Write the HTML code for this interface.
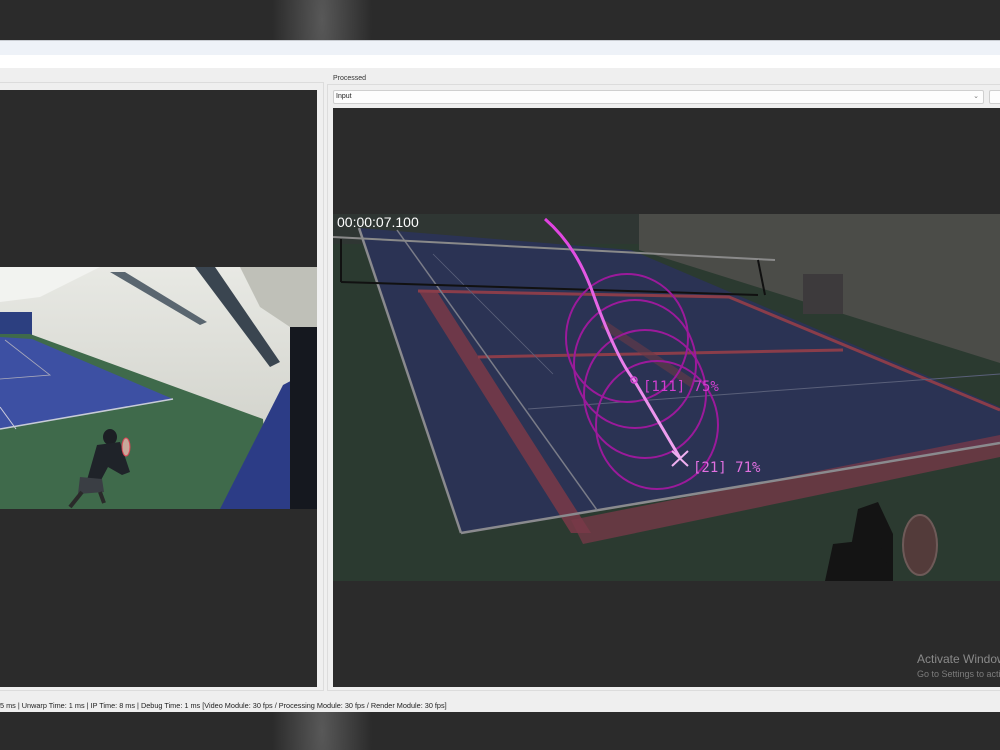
<!DOCTYPE html>
<html><head><meta charset="utf-8"><style>
*{margin:0;padding:0;box-sizing:border-box}
body{width:1000px;height:750px;overflow:hidden;background:#f0f0f0;font-family:"Liberation Sans",sans-serif;position:relative}
.abs{position:absolute}
.band{background:#2b2b2b;background-image:radial-gradient(ellipse 50px 200px at 322px 50%,#585858,rgba(43,43,43,0) 100%)}
</style></head><body>
<div class="abs band" style="left:0;top:0;width:1000px;height:40px"></div>
<div class="abs" style="left:0;top:40px;width:1000px;height:15px;background:#eef2f8;border-top:1px solid #c8ccd2"></div>
<div class="abs" style="left:0;top:55px;width:1000px;height:13px;background:#fff"></div>
<div class="abs" style="left:0;top:68px;width:1000px;height:644px;background:#efefef"></div>
<div class="abs" style="left:0;top:82px;width:324px;height:609px;border:1px solid #dcdcdc;border-left:none"></div>
<div class="abs" style="left:327px;top:84px;width:673px;height:607px;border:1px solid #dcdcdc;border-right:none"></div>
<div class="abs" style="left:332px;top:75px;font-size:7px;color:#333;background:#efefef;padding:0 1px">Processed</div>
<div class="abs" style="left:333px;top:90px;width:651px;height:14px;background:#fdfdfd;border:1px solid #cfcfcf;border-radius:2px;font-size:7px;color:#222;padding:2px 2px">Input<span style="position:absolute;right:4px;top:1px;color:#777;font-size:7px">&#8964;</span></div>
<div class="abs" style="left:989px;top:90px;width:20px;height:14px;background:#fdfdfd;border:1px solid #cfcfcf;border-radius:2px"></div>
<div class="abs" style="left:0;top:90px;width:317px;height:597px;background:#2b2b2b"></div>
<div class="abs" style="left:333px;top:108px;width:667px;height:579px;background:#2b2b2b"></div>

<svg class="abs" style="left:0;top:267px" width="317" height="242" viewBox="0 0 317 242">
<defs><linearGradient id="wl" x1="0" y1="0" x2="0" y2="1"><stop offset="0" stop-color="#e8e9e4"/><stop offset="1" stop-color="#c9cac2"/></linearGradient></defs>
<rect width="317" height="242" fill="url(#wl)"/>
<polygon points="0,0 100,0 40,30 0,35" fill="#f2f3f0"/>
<polygon points="110,5 125,5 207,55 200,58" fill="#5a6670"/>
<polygon points="195,0 215,0 280,95 270,100" fill="#3a4550"/>
<polygon points="240,0 317,0 317,65 290,60 260,40" fill="#bfc0b8"/>
<polygon points="0,45 32,45 32,72 0,72" fill="#2c3f80"/>
<polygon points="0,67 30,67 263,152 270,242 0,242" fill="#3f6a4b"/>
<polygon points="0,70 32,72 173,132 0,162" fill="#3d50a3"/>
<polyline points="0,162 173,132" stroke="#c8ccd8" stroke-width="1.5" fill="none"/>
<polyline points="5,73 50,108 0,112" stroke="#aab" stroke-width="0.8" fill="none"/>
<line x1="0" y1="140" x2="16" y2="162" stroke="#ccd" stroke-width="1"/>
<polygon points="283,118 317,100 317,242 220,242" fill="#2c3c86"/>
<rect x="290" y="60" width="27" height="182" fill="#15181f"/>
<ellipse cx="110" cy="170" rx="7" ry="8" fill="#1c1f24"/>
<polygon points="97,178 120,175 130,205 122,208 108,200 100,215 85,220" fill="#1f2329"/>
<polygon points="80,210 102,212 104,225 78,227" fill="#3a3e44"/>
<line x1="82" y1="225" x2="70" y2="240" stroke="#2a2a2a" stroke-width="4"/>
<line x1="100" y1="225" x2="104" y2="236" stroke="#2a2a2a" stroke-width="4"/>
<ellipse cx="126" cy="180" rx="4" ry="9" fill="#c9a89a" stroke="#d45" stroke-width="1"/>
</svg>

<svg class="abs" style="left:333px;top:214px" width="667" height="367" viewBox="0 0 667 367">
<defs><linearGradient id="tr" x1="0" y1="0" x2="0" y2="1"><stop offset="0" stop-color="#e040e0"/><stop offset="1" stop-color="#f0a8f0"/></linearGradient></defs>
<rect width="667" height="367" fill="#2b3a30"/>
<rect width="667" height="30" fill="#2f3633"/>
<polygon points="306,0 667,0 667,149 306,36" fill="#4b4c48"/>
<polygon points="26,14 298,36 667,193 667,229 128,319" fill="#2b3354"/>
<polygon points="85,76 103,76 258,319 238,319" fill="#7a3a48" opacity="0.85"/>
<polygon points="238,306 667,221 667,243 250,330" fill="#7a3a48" opacity="0.75"/>
<line x1="145" y1="143" x2="510" y2="136" stroke="#8a3d4a" stroke-width="3"/>
<polyline points="85,77 396,83 667,196" stroke="#8a3d4a" stroke-width="3" fill="none"/>
<line x1="270" y1="110" x2="360" y2="170" stroke="#6a3a48" stroke-width="8" opacity="0.6"/>
<line x1="26" y1="14" x2="128" y2="319" stroke="#8a8a8e" stroke-width="2.5"/>
<line x1="128" y1="319" x2="667" y2="229" stroke="#8a8a8e" stroke-width="2.5"/>
<line x1="64" y1="16" x2="264" y2="296" stroke="#7a7c88" stroke-width="1.5"/>
<line x1="195" y1="195" x2="667" y2="160" stroke="#5a607a" stroke-width="1"/>
<line x1="100" y1="40" x2="220" y2="160" stroke="#5a607a" stroke-width="0.8"/>
<line x1="0" y1="23" x2="442" y2="46" stroke="#8a8a8a" stroke-width="2"/>
<line x1="8" y1="68" x2="425" y2="81" stroke="#111" stroke-width="2"/>
<line x1="8" y1="25" x2="8" y2="68" stroke="#111" stroke-width="2"/>
<line x1="425" y1="46" x2="432" y2="81" stroke="#111" stroke-width="2"/>
<rect x="470" y="60" width="40" height="40" fill="#3d3a3c"/>
<polygon points="510,376 525,295 545,288 560,320 560,367" fill="#141414"/>
<polygon points="492,367 500,330 545,325 560,367" fill="#141414"/>
<ellipse cx="587" cy="331" rx="17" ry="30" fill="#5a3c3c" stroke="#7a6060" stroke-width="2" opacity="0.85"/>
<g fill="none" stroke="#9b1a9b" stroke-width="2">
<ellipse cx="294" cy="124" rx="61" ry="64"/>
<ellipse cx="302" cy="150" rx="61" ry="64"/>
<ellipse cx="312" cy="180" rx="61" ry="64"/>
<ellipse cx="324" cy="211" rx="61" ry="64"/>
</g>
<path d="M212,5 C235,25 250,50 262,85 C275,120 288,150 301,166 C318,195 334,222 347,244" stroke="url(#tr)" stroke-width="3" fill="none"/>
<circle cx="301" cy="166" r="3" fill="none" stroke="#d040d0" stroke-width="1.5"/>
<path d="M339,237 L355,252 M355,237 L339,252" stroke="#f0b0f0" stroke-width="2"/>
<text x="4" y="13" fill="#fff" font-family="Liberation Sans,sans-serif" font-size="14">00:00:07.100</text>
<text x="310" y="177" fill="#d040d0" font-family="DejaVu Sans Mono,monospace" font-size="14">[111] 75%</text>
<text x="360" y="258" fill="#e070e0" font-family="DejaVu Sans Mono,monospace" font-size="14">[21] 71%</text>
</svg>

<div class="abs" style="left:917px;top:652px;font-size:12px;color:#8a8a8a;white-space:nowrap">Activate Windows</div>
<div class="abs" style="left:917px;top:669px;font-size:9px;color:#7c7c7c;white-space:nowrap">Go to Settings to activate</div>
<div class="abs" style="left:0;top:701px;font-size:7.3px;color:#222;white-space:nowrap">5 ms | Unwarp Time: 1 ms | IP Time: 8 ms | Debug Time: 1 ms [Video Module: 30 fps / Processing Module: 30 fps / Render Module: 30 fps]</div>
<div class="abs band" style="left:0;top:712px;width:1000px;height:38px"></div>
</body></html>
